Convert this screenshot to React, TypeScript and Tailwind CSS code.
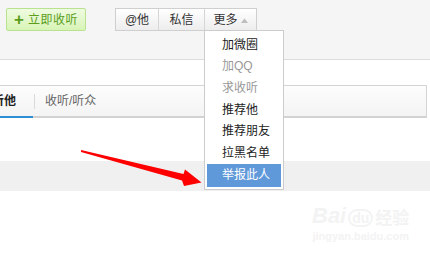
import React from "react";

const items: { label: string; muted?: boolean }[] = [
  { label: "加微圈" },
  { label: "加QQ", muted: true },
  { label: "求收听", muted: true },
  { label: "推荐他" },
  { label: "推荐朋友" },
  { label: "拉黑名单" },
];

export default function App() {
  return (
    <div className="relative w-[430px] h-[263px] overflow-hidden bg-white font-['Liberation_Sans','Noto_Sans_CJK_SC',sans-serif] text-[12px] leading-none">
      {/* header */}
      <div className="h-[60px] bg-[#f5f5f5] border-b border-[#dcdcdc] flex items-start pt-[8px]">
        <div className="ml-[6px] w-[80px] h-[23px] rounded-[2px] border border-[#b9e290] bg-gradient-to-b from-[#effbe1] to-[#d8f4b6] flex items-center justify-center gap-[4px] text-[#5a9e1c]">
          <span className="text-[17px] font-bold leading-none -mt-[1px]">+</span>
          <span className="text-[12px] tracking-[0.5px]">立即收听</span>
        </div>
        <div className="ml-[29px] flex h-[23px] border border-[#cfcfcf] bg-gradient-to-b from-white to-[#ededed] text-[#333]">
          <div className="w-[43px] flex items-center justify-center border-r border-[#d6d6d6]">@他</div>
          <div className="w-[46px] flex items-center justify-center border-r border-[#d6d6d6]">私信</div>
          <div className="w-[51px] flex items-center justify-center gap-[3px]">
            <span>更多</span>
            <svg width="7" height="5" viewBox="0 0 7 5" className="mt-[1px]">
              <polygon points="0,5 3.5,0.5 7,5" fill="#bdbdbd" />
            </svg>
          </div>
        </div>
      </div>

      {/* white gap */}
      <div className="h-[25px]" />

      {/* tab bar */}
      <div className="-ml-[1px] w-[428px] h-[33px] border-t border-r border-[#d4d4d4] bg-gradient-to-b from-[#fdfdfd] to-[#f3f3f3] flex flex-col">
        <div className="flex-1 flex items-center">
          <div className="w-[35px] relative h-full flex items-center overflow-hidden">
            <span className="absolute left-[-19px] font-bold text-[#222] text-[12px] whitespace-nowrap">收听他</span>
          </div>
          <div className="w-[1px] h-[15px] bg-[#dadada]" />
          <span className="ml-[10px] text-[#666] text-[12px]">收听/听众</span>
        </div>
        <div className="h-[2px] flex">
          <div className="w-[34px] bg-[#2e8fd5]" />
          <div className="flex-1 bg-[#d2d2d2]" />
        </div>
      </div>

      <div className="h-[43px]" />
      <div className="h-[30px] bg-[#f0f0f0]" />

      {/* watermark */}
      <div className="absolute left-[312px] top-[205px] flex flex-col items-center text-[#f3f3f3] select-none">
        <div className="flex items-end gap-[2px]">
          <span className="text-[22px] font-bold italic leading-none">Bai</span>
          <span className="text-[14px] font-bold leading-none border-2 border-[#f3f3f3] rounded-full px-[2px]">du</span>
          <span className="text-[17px] font-bold leading-none">经验</span>
        </div>
        <span className="mt-[4px] text-[11px] font-bold leading-none">jingyan.baidu.com</span>
      </div>

      {/* arrow */}
      <svg className="absolute left-0 top-0" width="430" height="263" viewBox="0 0 430 263">
        <polygon
          points="81,150 183.5,174 185,169.5 201.5,182.5 184,186 182,180.5 81,152"
          fill="#ff0000"
        />
      </svg>

      {/* dropdown menu */}
      <div className="absolute left-[204px] top-[30px] w-[80px] h-[160px] bg-white border border-[#cccccc] px-[2px] pt-[3px] flex flex-col">
        {items.map((it) => (
          <div
            key={it.label}
            className={`h-[21.67px] flex items-center pl-[15px] ${it.muted ? "text-[#999]" : "text-[#222]"}`}
          >
            {it.label}
          </div>
        ))}
        <div className="h-[23px] flex items-center pl-[15px] bg-[#5f99da] text-white">举报此人</div>
      </div>
    </div>
  );
}
